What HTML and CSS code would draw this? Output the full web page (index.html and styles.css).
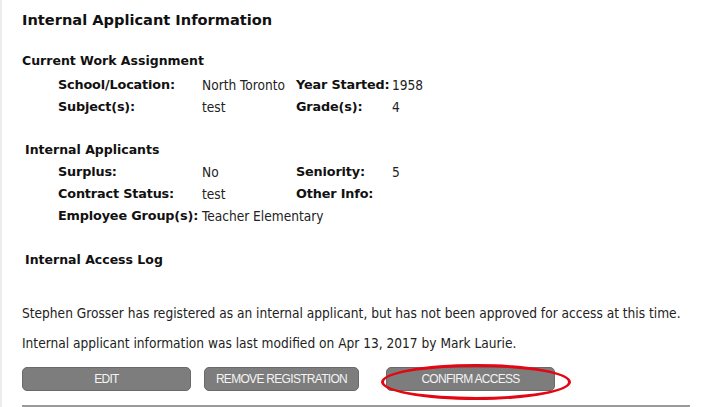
FILE: index.html
```html
<!DOCTYPE html>
<html>
<head>
<meta charset="utf-8">
<link rel="stylesheet" href="styles.css">
</head>
<body>
<div class="panel">
  <h1 class="title">Internal Applicant Information</h1>

  <h2 class="section">Current Work Assignment</h2>
  <div class="fields first-fields">
    <span class="lbl">School/Location:</span><span class="val">North Toronto</span><span class="lbl">Year Started:</span><span class="val">1958</span>
    <span class="lbl">Subject(s):</span><span class="val">test</span><span class="lbl">Grade(s):</span><span class="val">4</span>
  </div>

  <h2 class="section indent">Internal Applicants</h2>
  <div class="fields">
    <span class="lbl">Surplus:</span><span class="val">No</span><span class="lbl">Seniority:</span><span class="val">5</span>
    <span class="lbl">Contract Status:</span><span class="val">test</span><span class="lbl">Other Info:</span><span class="val"></span>
    <span class="lbl">Employee Group(s):</span><span class="val wide">Teacher Elementary</span>
  </div>

  <h2 class="section indent log">Internal Access Log</h2>

  <p class="msg first">Stephen Grosser has registered as an internal applicant, but has not been approved for access at this time.</p>
  <p class="msg second">Internal applicant information was last modified on Apr 13, 2017 by Mark Laurie.</p>

  <div class="buttons">
    <button class="btn b-edit">EDIT</button>
    <button class="btn b-remove">REMOVE REGISTRATION</button>
    <div class="confirm-wrap">
      <button class="btn b-confirm">CONFIRM ACCESS</button>
      <span class="circle"></span>
    </div>
  </div>
  <div class="rule"></div>
</div>
</body>
</html>
```

FILE: styles.css
```css
html, body {
  margin: 0;
  padding: 0;
  background: #ffffff;
}
body {
  width: 705px;
  height: 407px;
  overflow: hidden;
}
.panel {
  border-left: 2px solid #ececec;
  height: 407px;
  box-sizing: border-box;
  padding: 10px 0 0 20px;
  font-family: "DejaVu Sans", Verdana, sans-serif;
  color: #111;
}
.title {
  margin: 0;
  font-size: 14.6px;
  line-height: 20px;
  font-weight: bold;
}
.section {
  margin: 20px 0 0 0;
  font-size: 12.5px;
  line-height: 22px;
  height: 22px;
  font-weight: bold;
}
.section.indent {
  padding-left: 3px;
  margin-top: 21px;
}
.section.log {
  margin-top: 22px;
}
.fields {
  display: grid;
  grid-template-columns: 144px 94px 96px auto;
  grid-auto-rows: 22px;
  align-items: center;
  padding-left: 36px;
}
.fields.first-fields {
  margin-top: 2px;
}
.lbl {
  font-size: 12.8px;
  font-weight: bold;
  letter-spacing: -0.15px;
  line-height: 22px;
  white-space: nowrap;
}
.val {
  font-family: "DejaVu Sans Condensed", Tahoma, sans-serif;
  font-size: 13.6px;
  line-height: 22px;
  color: #222;
  white-space: nowrap;
}
.val.wide {
  grid-column: 2 / span 3;
}
.msg {
  margin: 0;
  font-family: "DejaVu Sans Condensed", Tahoma, sans-serif;
  font-size: 13.6px;
  line-height: 22px;
  height: 22px;
  color: #222;
}
.msg.first {
  margin-top: 31px;
}
.msg.second {
  margin-top: 8px;
}
.buttons {
  display: flex;
  margin-top: 13px;
  height: 24px;
}
.btn {
  height: 24px;
  box-sizing: border-box;
  background: #7d7d7d;
  border: 1px solid #6a6a6a;
  border-radius: 5px;
  color: #f4f4f4;
  font-family: "Liberation Sans", Arial, sans-serif;
  font-size: 12px;
  letter-spacing: -0.7px;
  padding: 0;
}
.b-edit { width: 169px; }
.b-remove { width: 155px; margin-left: 13px; }
.confirm-wrap {
  position: relative;
  margin-left: 27px;
}
.b-confirm { width: 169px; }
.circle {
  position: absolute;
  left: -5px;
  top: -3px;
  width: 190px;
  height: 36px;
  box-sizing: border-box;
  border: 3px solid #e30613;
  border-radius: 50%;
}
.rule {
  margin-top: 14px;
  width: 668px;
  height: 2px;
  background: #9a9a9a;
}
```
